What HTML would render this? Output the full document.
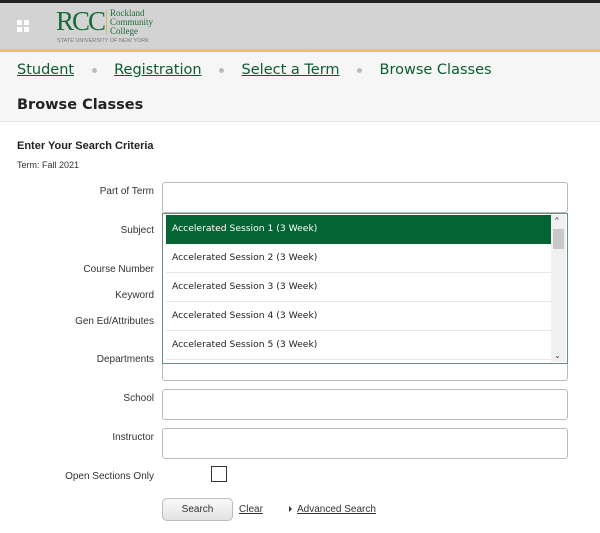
<!DOCTYPE html><html><head><style>
body{margin:0;width:600px;height:533px;overflow:hidden;background:#fff;font-family:"Liberation Sans",sans-serif;position:relative}
.a{position:absolute}
.lbl{position:absolute;right:446px;font-size:10px;color:#333;text-align:right;white-space:nowrap}
.inp{position:absolute;left:162px;width:406px;height:31px;border:1px solid #bbb;border-radius:3px;background:#fff;box-sizing:border-box}
.bc{font-family:"DejaVu Sans",sans-serif;font-size:14.5px;color:#0b5c2f}
.bc u{text-decoration:underline}
.dot{display:inline-block;width:5px;height:5px;border-radius:50%;background:#bbb;margin:0 17.5px;vertical-align:middle}
.opt{height:28px;line-height:28px;padding-left:6px;font-family:"DejaVu Sans",sans-serif;font-size:9.2px;color:#222;border-bottom:1px solid #e6e6e6}
</style></head><body>
<div class="a" style="left:0;top:0;width:600px;height:3px;background:#222"></div>
<div class="a" style="left:0;top:3px;width:600px;height:46px;background:#d3d3d3"></div>
<div class="a" style="left:0;top:49px;width:600px;height:3px;background:#e8c56a"></div>
<div class="a" style="left:0;top:52px;width:600px;height:69px;background:#f6f6f6;border-bottom:1px solid #e5e5e5"></div>
<div class="a" style="left:17px;top:20px;width:5px;height:5px;background:#fff;box-shadow:7px 0 #fff,0 7px #fff,7px 7px #fff"></div>
<div class="a" style="left:56px;top:6px;font-family:'Liberation Serif',serif;font-size:27px;color:#1a6b3a;letter-spacing:-2px">RCC</div>
<div class="a" style="left:106px;top:10px;width:1px;height:24px;background:#d8b866"></div>
<div class="a" style="left:110px;top:9px;font-family:'Liberation Serif',serif;font-size:9px;line-height:9px;color:#1a6b3a">Rockland<br>Community<br>College</div>
<div class="a" style="left:57px;top:38px;font-size:5.5px;color:#777">STATE UNIVERSITY OF NEW YORK</div>
<div class="a bc" style="left:17px;top:62px"><u>Student</u><span class="dot"></span><u>Registration</u><span class="dot"></span><u>Select a Term</u><span class="dot"></span>Browse Classes</div>
<div class="a" style="left:17px;top:97px;font-family:'DejaVu Sans',sans-serif;font-weight:bold;font-size:14.5px;color:#222">Browse Classes</div>
<div class="a" style="left:17px;top:140px;font-weight:bold;font-size:11px;color:#222">Enter Your Search Criteria</div>
<div class="a" style="left:17px;top:160px;font-size:9px;color:#333">Term: Fall 2021</div>
<div class="lbl" style="top:186px">Part of Term</div>
<div class="lbl" style="top:225px">Subject</div>
<div class="lbl" style="top:264px">Course Number</div>
<div class="lbl" style="top:290px">Keyword</div>
<div class="lbl" style="top:316px">Gen Ed/Attributes</div>
<div class="lbl" style="top:354px">Departments</div>
<div class="lbl" style="top:393px">School</div>
<div class="lbl" style="top:432px">Instructor</div>
<div class="lbl" style="top:471px">Open Sections Only</div>
<div class="inp" style="top:182px"></div>
<div class="inp" style="top:350px"></div>
<div class="inp" style="top:389px"></div>
<div class="inp" style="top:428px"></div>
<div class="a" style="left:162px;top:213px;width:406px;height:151px;border:1px solid #6a8f78;background:#fff;box-sizing:border-box;overflow:hidden">
<div style="position:absolute;left:3px;top:1px;width:386px">
<div class="opt" style="background:#046433;color:#fff;border-bottom-color:#046433">Accelerated Session 1 (3 Week)</div>
<div class="opt">Accelerated Session 2 (3 Week)</div>
<div class="opt">Accelerated Session 3 (3 Week)</div>
<div class="opt">Accelerated Session 4 (3 Week)</div>
<div class="opt">Accelerated Session 5 (3 Week)</div>
</div>
<div style="position:absolute;right:1px;top:1px;width:15px;height:147px;background:#f0f0f0">
<div style="position:absolute;left:2px;top:14px;width:11px;height:20px;background:#c8c8c8"></div>
<div style="position:absolute;left:4px;top:1px;font-size:8px;color:#444">^</div>
<div style="position:absolute;left:3px;bottom:2px;font-size:8px;color:#444">&#8964;</div>
</div></div>
<div class="a" style="left:211px;top:466px;width:16px;height:16px;border:1.5px solid #333;box-sizing:border-box"></div>
<div class="a" style="left:162px;top:498px;width:71px;height:23px;border:1px solid #bbb;border-radius:5px;background:linear-gradient(#fafafa,#e2e2e2);box-sizing:border-box;font-size:10px;color:#333;text-align:center;line-height:21px">Search</div>
<div class="a" style="left:239px;top:504px;font-size:10px;color:#333;text-decoration:underline">Clear</div>
<div class="a" style="left:289px;top:506px;width:0;height:0;border-left:3px solid #333;border-top:3px solid transparent;border-bottom:3px solid transparent"></div>
<div class="a" style="left:297px;top:504px;font-size:10px;color:#333;text-decoration:underline">Advanced Search</div>
</body></html>
